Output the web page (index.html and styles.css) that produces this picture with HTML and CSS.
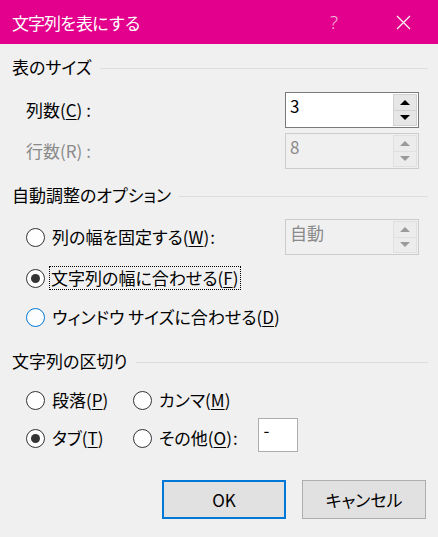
FILE: index.html
```html
<!DOCTYPE html>
<html lang="ja">
<head>
<meta charset="utf-8">
<title>文字列を表にする</title>
<link rel="stylesheet" href="styles.css">
</head>
<body>
<div class="dialog">
  <div class="titlebar">
    <span class="title">文字列を表にする</span>
    <span class="help">?</span>
    <span class="close"><svg width="15" height="15" viewBox="0 0 15 15"><path d="M1 1L14 14M14 1L1 14" stroke="#fff" stroke-width="1.2" fill="none"/></svg></span>
  </div>
  <div class="content">
    <div class="group-head g1"><span>表のサイズ</span><i class="rule"></i></div>
    <div class="row r-cols">
      <span class="label">列数(<u>C</u>)<span class="colon">:</span></span>
      <div class="spin">
        <div class="spin-val">3</div>
        <div class="spin-btns"><div class="spin-btn"><i class="tri up"></i></div><div class="spin-btn"><i class="tri down"></i></div></div>
      </div>
    </div>
    <div class="row r-rows disabled">
      <span class="label">行数(R)<span class="colon">:</span></span>
      <div class="spin off">
        <div class="spin-val">8</div>
        <div class="spin-btns"><div class="spin-btn"><i class="tri up"></i></div><div class="spin-btn"><i class="tri down"></i></div></div>
      </div>
    </div>

    <div class="group-head g2"><span>自動調整のオプション</span><i class="rule"></i></div>
    <div class="row r-fixed">
      <label class="opt"><span class="radio"></span><span class="text">列の幅を固定する(<u>W</u>)<span class="colon">:</span></span></label>
      <div class="spin off">
        <div class="spin-val">自動</div>
        <div class="spin-btns"><div class="spin-btn"><i class="tri up"></i></div><div class="spin-btn"><i class="tri down"></i></div></div>
      </div>
    </div>
    <div class="row r-fit">
      <label class="opt"><span class="radio checked"></span><span class="text focus">文字列の幅に合わせる(<u>F</u>)</span></label>
    </div>
    <div class="row r-win">
      <label class="opt"><span class="radio hover"></span><span class="text">ウィンドウ サイズに合わせる(<u>D</u>)</span></label>
    </div>

    <div class="group-head g3"><span>文字列の区切り</span><i class="rule"></i></div>
    <div class="sep-grid">
      <label class="opt"><span class="radio"></span><span class="text">段落(<u>P</u>)</span></label>
      <label class="opt"><span class="radio"></span><span class="text">カンマ(<u>M</u>)</span></label>
      <label class="opt low"><span class="radio checked"></span><span class="text">タブ(<u>T</u>)</span></label>
      <div class="other">
        <label class="opt low"><span class="radio"></span><span class="text">その他(<u>O</u>)<span class="colon">:</span></span></label>
        <div class="char-box">-</div>
      </div>
    </div>

    <div class="buttons">
      <button class="btn default">OK</button>
      <button class="btn">キャンセル</button>
    </div>
  </div>
</div>
</body>
</html>
```

FILE: styles.css
```css
html, body {
  margin: 0;
  padding: 0;
}
body {
  width: 438px;
  height: 537px;
  overflow: hidden;
  background: #f0f0f0;
  font-family: "Noto Sans CJK JP", "Noto Sans", sans-serif;
  font-size: 17px;
  color: #000;
  font-feature-settings: "palt";
}
.dialog {
  width: 438px;
  height: 537px;
  background: #f0f0f0;
}
.titlebar {
  height: 44px;
  background: #e3008c;
  color: #fff;
  display: flex;
  align-items: center;
}
.title {
  font-size: 17px;
  margin-left: 12px;
  flex: 1;
  font-feature-settings: normal;
  letter-spacing: -1px;
}
.help {
  font-family: "Noto Sans", sans-serif;
  font-size: 19px;
  font-weight: 300;
  color: #f4b8dc;
  width: 20px;
  text-align: center;
  margin-right: 52px;
}
.close {
  display: flex;
  margin-right: 27px;
}
.content {
  padding: 0 10px 0 12px;
}
.group-head {
  display: flex;
  align-items: center;
  height: 24px;
  line-height: 24px;
}
.group-head > span {
  padding-bottom: 3px;
}
.group-head .rule {
  flex: 1;
  height: 1px;
  background: #dcdcdc;
  margin-left: 8px;
}
.g1 { margin-top: 12px; }
.g2 { margin-top: 15px; }
.g3 { margin-top: 21px; }
.row {
  display: flex;
  align-items: center;
  justify-content: space-between;
  padding-left: 14px;
  padding-right: 9px;
}
.r-cols { margin-top: 12px; }
.r-rows { margin-top: 5px; }
.r-fixed { margin-top: 11px; }
.r-fit { margin-top: 11px; height: 24px; }
.r-win { margin-top: 15px; height: 24px; }
.label { line-height: 24px; }
.disabled .label { color: #8a8a8a; }
.colon { margin-left: 1px; }
.label .colon { margin-left: 4px; }
u { text-decoration-thickness: 1px; text-underline-offset: 2px; }

.spin {
  width: 134px;
  height: 36px;
  box-sizing: border-box;
  border: 1px solid #7a7a7a;
  background: #fff;
  display: flex;
}
.spin.off {
  border-color: #cccccc;
  background: #f0f0f0;
  color: #8a8a8a;
}
.spin-val {
  flex: 1;
  padding-left: 4px;
  font-size: 17px;
  line-height: 26px;
}
.spin-btns {
  width: 24px;
  display: flex;
  flex-direction: column;
  padding: 1px 1px 1px 0;
}
.spin-btn {
  flex: 1;
  background: #e6e6e6;
  border: 1px solid #d2d2d2;
  display: flex;
  align-items: center;
  justify-content: center;
}
.spin-btn + .spin-btn { border-top: none; }
.spin.off .spin-btn {
  background: #ececec;
  border-color: #e0e0e0;
}
.tri {
  width: 0;
  height: 0;
  border-left: 5px solid transparent;
  border-right: 5px solid transparent;
}
.tri.up { border-bottom: 5px solid #000; }
.tri.down { border-top: 5px solid #000; }
.spin.off .tri.up { border-bottom-color: #9a9a9a; }
.spin.off .tri.down { border-top-color: #9a9a9a; }

.opt {
  display: flex;
  align-items: center;
  gap: 7px;
  line-height: 22px;
}
.radio {
  width: 19px;
  height: 19px;
  box-sizing: border-box;
  border: 1px solid #333;
  border-radius: 50%;
  background: #fff;
  display: flex;
  align-items: center;
  justify-content: center;
  flex: none;
}
.radio.checked::after {
  content: "";
  width: 9px;
  height: 9px;
  border-radius: 50%;
  background: #333;
}
.radio.hover {
  border-color: #0078d7;
  background: #fbfdff;
}
.text.focus {
  outline: 1px dotted #000;
  outline-offset: 0;
  padding: 0 2px 0 1px;
  margin-left: -2px;
}

.sep-grid {
  display: grid;
  grid-template-columns: 107px auto;
  grid-template-rows: 24px 34px;
  row-gap: 6px;
  align-items: center;
  justify-items: start;
  margin-top: 14px;
  padding-left: 14px;
}
.opt.low { margin-top: 6px; }
.other {
  display: flex;
  align-items: center;
  gap: 20px;
}
.char-box {
  width: 40px;
  height: 34px;
  box-sizing: border-box;
  border: 1px solid #adadad;
  background: #fff;
  padding-left: 5px;
  line-height: 22px;
}

.buttons {
  display: flex;
  justify-content: flex-end;
  gap: 16px;
  margin-top: 28px;
  padding-right: 2px;
}
.btn {
  width: 124px;
  height: 39px;
  box-sizing: border-box;
  background: #e1e1e1;
  border: 1px solid #adadad;
  font-family: "Noto Sans CJK JP", "Noto Sans", sans-serif;
  font-size: 17px;
  color: #000;
  padding: 0;
  font-feature-settings: "palt";
}
.btn.default {
  border: 2px solid #0078d7;
}
```
